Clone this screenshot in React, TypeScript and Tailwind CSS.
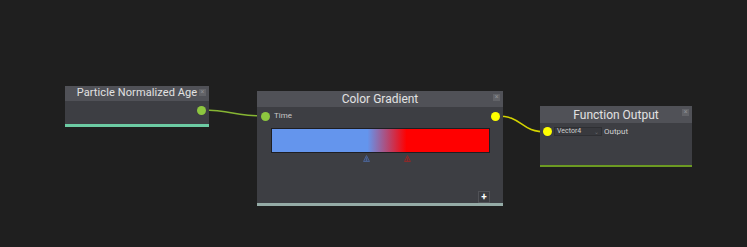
import React from "react";

const font = { fontFamily: "Roboto, 'Noto Sans', sans-serif" };

function Close() {
  return (
    <div className="absolute right-[3px] top-[3px] w-[7px] h-[7px] bg-[#626368] flex items-center justify-center text-[7px] leading-none text-[#8e8f94]">
      ×
    </div>
  );
}

function Marker({ color, fill }: { color: string; fill: string }) {
  return (
    <svg width={7} height={7} viewBox="0 0 7 7">
      <path d="M3.5 0.5 L6.5 6.5 L0.5 6.5 Z" fill={fill} stroke={color} strokeWidth={1} />
      <line x1={3.5} y1={2.5} x2={3.5} y2={6} stroke={color} strokeWidth={1} />
    </svg>
  );
}

export default function App() {
  return (
    <div className="relative w-[747px] h-[247px] bg-[#1f1f1f] overflow-hidden" style={font}>
      <svg className="absolute left-0 top-0" width={747} height={247}>
        <path d="M201 110 C 235 110, 230 116, 265 116" stroke="#86b533" strokeWidth={1.5} fill="none" />
        <path d="M496 116 C 525 116, 518 132, 548 132" stroke="#d4d400" strokeWidth={1.5} fill="none" />
      </svg>

      {/* Particle Normalized Age */}
      <div className="absolute left-[65px] top-[86px] w-[144px] flex flex-col">
        <div className="relative h-[15px] bg-[#505157] flex items-center justify-center text-[11px] tracking-[0.1px] text-[#e2e2e2]">
          Particle Normalized Age
          <Close />
        </div>
        <div className="relative h-[23px] bg-[#3d3e43]">
          <div className="absolute right-[3px] top-[5px] w-[9px] h-[9px] rounded-full bg-[#8dc63f]" />
        </div>
        <div className="h-[3px] bg-[#6ccba3]" />
      </div>

      {/* Color Gradient */}
      <div className="absolute left-[257px] top-[91px] w-[246px] flex flex-col">
        <div className="relative h-[16px] bg-[#505157] flex items-center justify-center text-[12px] text-[#e2e2e2]">
          Color Gradient
          <Close />
        </div>
        <div className="relative h-[96px] bg-[#3d3e43] flex flex-col">
          <div className="flex items-center h-[18px] pl-[4px] pr-[3px]">
            <div className="w-[9px] h-[9px] rounded-full bg-[#8dc63f]" />
            <span className="ml-[4px] text-[8px] text-[#c8c8c8]">Time</span>
            <div className="ml-auto w-[9px] h-[9px] rounded-full bg-[#ffff00]" />
          </div>
          <div className="mt-[3px] ml-[14px] w-[219px] h-[25px] border border-[#1e1e22] bg-[linear-gradient(to_right,#6495ed_0%,#6495ed_44%,#ff0000_62%,#ff0000_100%)]" />
          <div className="relative h-[10px]">
            <div className="absolute left-[106px] top-[2px]">
              <Marker color="#4a6190" fill="#3d4a66" />
            </div>
            <div className="absolute left-[147px] top-[2px]">
              <Marker color="#8a2b2b" fill="#5a3035" />
            </div>
          </div>
          <div className="absolute right-[13px] bottom-0 w-[12px] h-[12px] border border-[#505156] bg-[#3a3b40] flex items-center justify-center text-[10px] leading-none font-bold text-white">
            +
          </div>
        </div>
        <div className="h-[3px] bg-[#95aba6]" />
      </div>

      {/* Function Output */}
      <div className="absolute left-[540px] top-[106px] w-[152px] flex flex-col">
        <div className="relative h-[17px] bg-[#505157] flex items-center justify-center text-[12px] text-[#e2e2e2]">
          Function Output
          <Close />
        </div>
        <div className="relative h-[42px] bg-[#3d3e43]">
          <div className="flex items-center pt-[4px] pl-[3px]">
            <div className="w-[9px] h-[9px] rounded-full bg-[#ffff00]" />
            <div className="ml-[2px] w-[48px] h-[9px] border border-[#2e2f33] bg-[#38393e] flex items-center justify-between px-[2px] text-[7px] leading-none text-[#d0d0d0]">
              <span>Vector4</span>
              <span className="text-[#6a6b70] text-[6px]">⌄</span>
            </div>
            <span className="ml-[2px] text-[8px] leading-none text-[#d0d0d0]">Output</span>
          </div>
        </div>
        <div className="h-[2px] bg-[#6c9a22]" />
      </div>
    </div>
  );
}
